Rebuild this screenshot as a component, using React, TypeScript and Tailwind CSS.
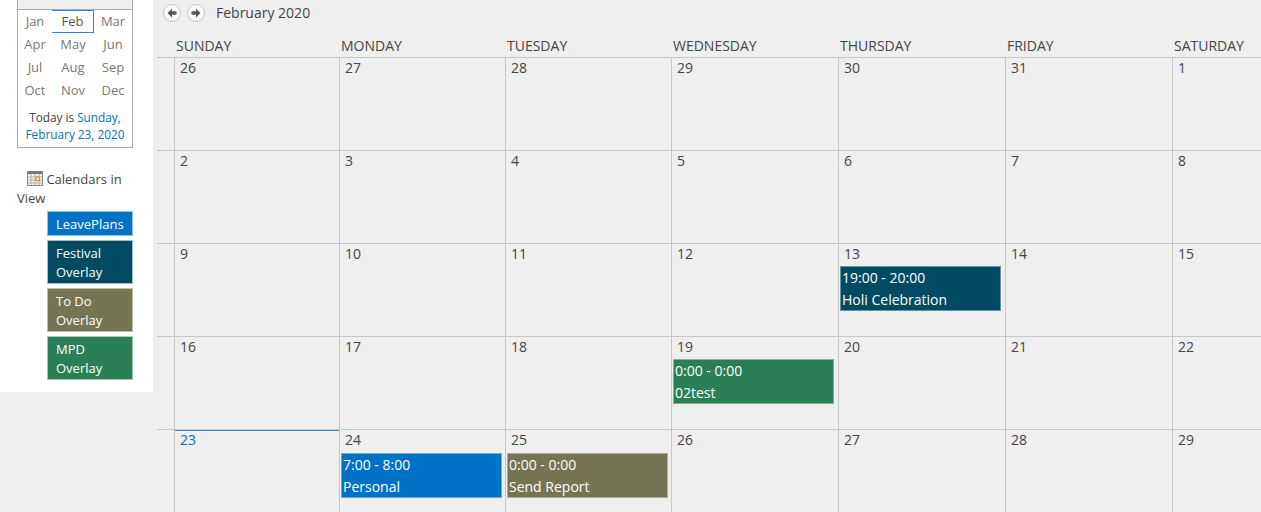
const months = ['Jan', 'Feb', 'Mar', 'Apr', 'May', 'Jun', 'Jul', 'Aug', 'Sep', 'Oct', 'Nov', 'Dec'];
const days = ['SUNDAY', 'MONDAY', 'TUESDAY', 'WEDNESDAY', 'THURSDAY', 'FRIDAY', 'SATURDAY'];

const colClass = 'grid grid-cols-[17px_165px_166px_166px_167px_167px_167px_89px]';

interface CalEvent {
  time: string;
  title: string;
  color: string;
}

interface Cell {
  day: number;
  today?: boolean;
  event?: CalEvent;
}

const weeks: Cell[][] = [
  [{ day: 26 }, { day: 27 }, { day: 28 }, { day: 29 }, { day: 30 }, { day: 31 }, { day: 1 }],
  [{ day: 2 }, { day: 3 }, { day: 4 }, { day: 5 }, { day: 6 }, { day: 7 }, { day: 8 }],
  [
    { day: 9 },
    { day: 10 },
    { day: 11 },
    { day: 12 },
    { day: 13, event: { time: '19:00 - 20:00', title: 'Holi Celebration', color: 'bg-[#004b63]' } },
    { day: 14 },
    { day: 15 },
  ],
  [
    { day: 16 },
    { day: 17 },
    { day: 18 },
    { day: 19, event: { time: '0:00 - 0:00', title: '02test', color: 'bg-[#2b7f57]' } },
    { day: 20 },
    { day: 21 },
    { day: 22 },
  ],
  [
    { day: 23, today: true },
    { day: 24, event: { time: '7:00 - 8:00', title: 'Personal', color: 'bg-[#0072c6]' } },
    { day: 25, event: { time: '0:00 - 0:00', title: 'Send Report', color: 'bg-[#757553]' } },
    { day: 26 },
    { day: 27 },
    { day: 28 },
    { day: 29 },
  ],
];

const overlays = [
  { name: 'LeavePlans', color: 'bg-[#0072c6]', border: 'border-[#8fc3e8]' },
  { name: 'Festival Overlay', color: 'bg-[#004b63]', border: 'border-[#a3bcc6]' },
  { name: 'To Do Overlay', color: 'bg-[#757553]', border: 'border-[#bfbfae]' },
  { name: 'MPD Overlay', color: 'bg-[#2b7f57]', border: 'border-[#a5c9b8]' },
];

function ArrowButton({ dir }: { dir: 'left' | 'right' }) {
  return (
    <svg width="18" height="18" viewBox="0 0 18 18">
      <circle cx="9" cy="9" r="8.5" fill="#fafafa" stroke="#c4c4c4" />
      <path
        d={dir === 'left' ? 'M9 4.5 4.5 9 9 13.5V10.8h4.5V7.2H9z' : 'M9 4.5 13.5 9 9 13.5V10.8H4.5V7.2H9z'}
        fill="#555"
      />
    </svg>
  );
}

function CalendarIcon() {
  return (
    <svg width="16" height="15" viewBox="0 0 16 15" className="inline-block align-[-2px]">
      <rect x="0.5" y="0.5" width="15" height="14" fill="#f6f1e8" stroke="#8a8a8a" />
      <rect x="0.5" y="0.5" width="15" height="2.5" fill="#777" />
      <path d="M4 3v11M8 3v11M12 3v11M1 6h14M1 9h14M1 12h14" stroke="#b5ae9f" strokeWidth="1" />
      <rect x="9" y="6" width="3.5" height="3.5" fill="#f8e6c4" stroke="#d98a2b" strokeWidth="1" />
    </svg>
  );
}

export default function App() {
  return (
    <div className="flex h-[512px] w-[1261px] overflow-hidden bg-[#efefef] font-['Open_Sans','Noto_Sans',sans-serif] text-[#444444]">
      <aside className="h-[392px] w-[153px] shrink-0 bg-white pl-[17px] pr-[20px]">
        <div className="h-[148px] w-[116px] border-b border-l border-r border-[#ababab]">
          <div className="h-[10px] border-b border-[#ababab] bg-[#efefef]" />
          <div className="grid grid-cols-[34px_42px_38px] text-[13px] leading-[23px] text-[#777777]">
            {months.map((m) => (
              <div
                key={m}
                className={
                  m === 'Feb'
                    ? 'h-[23px] border-b border-r border-t border-[#2a8dd4] text-center leading-[21px] text-[#555555]'
                    : 'h-[23px] text-center'
                }
              >
                {m}
              </div>
            ))}
          </div>
          <p className="mt-[7px] text-center text-[11.8px] leading-[17px]">
            Today is <span className="text-[#0072c6]">Sunday,</span>
            <br />
            <span className="text-[#0072c6]">February 23, 2020</span>
          </p>
        </div>
        <div className="mt-[22px] text-[13px] leading-[19px]">
          <div className="pl-[10px]">
            <CalendarIcon /> Calendars in
          </div>
          <div>View</div>
        </div>
        <div className="ml-[30px] mt-[3px] flex w-[86px] flex-col gap-[4px] text-[13px] leading-[19px] text-white">
          {overlays.map((o) => (
            <div key={o.name} className={`border pb-[1px] pl-[8px] pt-[3px] ${o.color} ${o.border}`}>
              {o.name}
            </div>
          ))}
        </div>
      </aside>

      <main className="min-w-0 flex-1 pl-[4px]">
        <div className="flex h-[26px] items-center pl-[6px]">
          <div className="flex gap-[6px]">
            <ArrowButton dir="left" />
            <ArrowButton dir="right" />
          </div>
          <span className="mb-[2px] ml-[11px] text-[14px]">February 2020</span>
        </div>
        <div className={`${colClass} h-[31px] pt-[11px] text-[14px] leading-[18px]`}>
          <div />
          {days.map((d) => (
            <div key={d} className="pl-[2px]">
              {d}
            </div>
          ))}
        </div>
        {weeks.map((week, i) => (
          <div key={i} className={`${colClass} h-[93px] border-t border-[#c6c6c6]`}>
            <div />
            {week.map((cell, j) => (
              <div key={j} className="relative border-l border-[#c6c6c6] pl-[1px]">
                {cell.today && <div className="absolute left-0 right-0 top-0 h-px bg-[#2a8dd4]" />}
                <div className={`pl-[4px] text-[14px] leading-[19px] ${cell.today ? 'text-[#0072c6]' : ''}`}>
                  {cell.day}
                </div>
                {cell.event && (
                  <div
                    className={`h-[45px] w-[161px] border border-white/40 pl-[1px] text-[14px] leading-[22px] text-white ${i === 4 ? 'mt-[4px]' : 'mt-[3px]'} ${cell.event.color}`}
                  >
                    <div>{cell.event.time}</div>
                    <div>{cell.event.title}</div>
                  </div>
                )}
              </div>
            ))}
          </div>
        ))}
      </main>
    </div>
  );
}
